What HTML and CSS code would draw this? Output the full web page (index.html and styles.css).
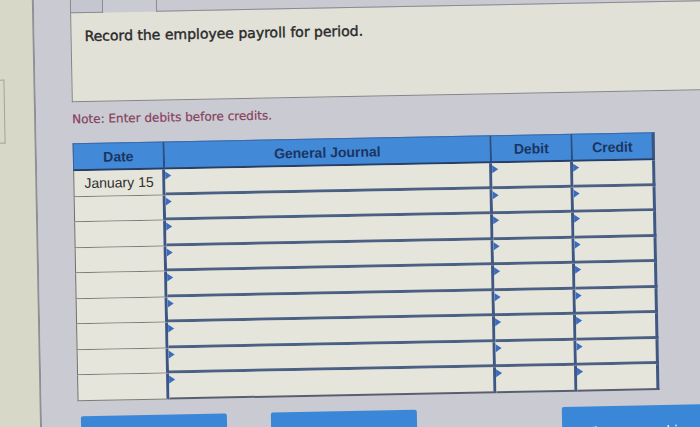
FILE: index.html
```html
<!DOCTYPE html>
<html lang="en">
<head>
<meta charset="utf-8">
<title>Record the employee payroll</title>
<link rel="stylesheet" href="styles.css">
</head>
<body>
<div class="page">
  <div class="strip">
    <div class="strip-box"></div>
  </div>
  <div class="main">
    <div class="tabs">
      <div class="tab tab-a"></div>
      <div class="tab tab-b"></div>
    </div>
    <div class="prompt">
      <p class="prompt-text">Record the employee payroll for period.</p>
    </div>
    <p class="note">Note: Enter debits before credits.</p>
    <div class="journal">
      <div class="hd">Date</div>
      <div class="hd">General Journal</div>
      <div class="hd">Debit</div>
      <div class="hd hd-last">Credit</div>

      <div class="c-date">January 15</div><div class="c-in c-gj"></div><div class="c-in"></div><div class="c-in"></div>
      <div class="c-date"></div><div class="c-in c-gj"></div><div class="c-in"></div><div class="c-in"></div>
      <div class="c-date"></div><div class="c-in c-gj"></div><div class="c-in"></div><div class="c-in"></div>
      <div class="c-date"></div><div class="c-in c-gj"></div><div class="c-in"></div><div class="c-in"></div>
      <div class="c-date"></div><div class="c-in c-gj"></div><div class="c-in"></div><div class="c-in"></div>
      <div class="c-date"></div><div class="c-in c-gj"></div><div class="c-in"></div><div class="c-in"></div>
      <div class="c-date"></div><div class="c-in c-gj"></div><div class="c-in"></div><div class="c-in"></div>
      <div class="c-date"></div><div class="c-in c-gj"></div><div class="c-in"></div><div class="c-in"></div>
      <div class="c-date last"></div><div class="c-in c-gj last"></div><div class="c-in last"></div><div class="c-in last"></div>
    </div>
    <div class="buttons">
      <button class="btn btn-record" aria-label="Record entry"></button>
      <button class="btn btn-clear" aria-label="Clear entry"></button>
      <button class="btn btn-view">View general journal</button>
    </div>
  </div>
</div>
</body>
</html>
```

FILE: styles.css
```css
html, body {
  margin: 0;
  padding: 0;
  width: 700px;
  height: 427px;
  overflow: hidden;
  background: #cdcdd3;
}

* {
  box-sizing: border-box;
}

.page {
  width: 820px;
  height: 520px;
  margin: -36px 0 0 -40px;
  display: flex;
  transform: rotate(-1.1deg);
  transform-origin: 390px 249px;
  background: #cdcdd3;
}

.strip {
  width: 78px;
  flex: none;
  background: #d8d8c9;
  border-right: 2px solid #8f8f96;
  padding: 109px 0 0 40px;
}

.strip-box {
  width: 7px;
  height: 64px;
  border: 1px solid #a3a39a;
  border-left: none;
}

.main {
  flex: 1;
  padding: 30px 0 0 36px;
  background: #cacad2;
}

.tabs {
  height: 14px;
  display: flex;
}

.tab {
  background: #c6c6d0;
  border-bottom: 1px solid #8a8a8f;
}

.tab-a {
  width: 33px;
  border-left: 1px solid #8a8a8f;
  border-right: 1px solid #8a8a8f;
}

.tab-b {
  flex: 1;
  margin-left: 53px;
  border-left: 1px solid #8a8a8f;
  background: #c9c9d1;
}

.prompt {
  height: 89px;
  background: #e2e1d8;
  border: 1px solid #85858a;
  border-top: none;
  padding: 15px 0 0 13px;
}

.prompt-text {
  margin: 0;
  font-family: "DejaVu Sans", Verdana, sans-serif;
  font-size: 14px;
  line-height: 17px;
  color: #2a2a2a;
  -webkit-text-stroke: 0.4px #2a2a2a;
}

.note {
  margin: 10px 0 0 0;
  font-family: "DejaVu Sans", Verdana, sans-serif;
  font-size: 12px;
  line-height: 14px;
  color: #86405a;
  -webkit-text-stroke: 0.2px #86405a;
}

.journal {
  margin-top: 17px;
  width: 582px;
  display: grid;
  grid-template-columns: 92px 327px 81px 82px;
  grid-template-rows: 28px repeat(9, 25.5px);
  font-family: "Liberation Sans", Arial, sans-serif;
  font-size: 14px;
}

.hd {
  background: #4289d8;
  color: #1b3560;
  font-weight: bold;
  display: flex;
  align-items: center;
  justify-content: center;
  border-top: 1px solid #3a6aa8;
  border-right: 2px solid #2c4f82;
  border-bottom: 2px solid #2a3d62;
}

.hd:first-child {
  border-left: 1px solid #3a5f96;
}

.hd-last {
  border-right: 3px solid #3c557e;
}

.c-date {
  background: #e6e5db;
  border-left: 1px solid #6e6e6e;
  border-bottom: 1px solid #7b7b78;
  border-right: 3px solid #3b5686;
  display: flex;
  align-items: center;
  padding-left: 10px;
  color: #2e2e2e;
}

.c-in {
  position: relative;
  background: #e6e5db;
  border-bottom: 3px solid #4b6082;
  border-right: 3px solid #3d5884;
}

.c-in::before {
  content: "";
  position: absolute;
  left: 0;
  top: 2px;
  border-top: 4px solid transparent;
  border-bottom: 4px solid transparent;
  border-left: 6px solid #3a6cbf;
}

.c-gj.last {
  border-bottom: 2px solid #5a6070;
}

.c-in.last {
  border-bottom-width: 2px;
  border-bottom-color: #585e70;
}

.buttons {
  margin-top: 15px;
  display: flex;
  padding-left: 3px;
}

.btn {
  height: 40px;
  border: none;
  border-radius: 2px;
  background: #3b87d7;
  color: #ffffff;
  font-family: "DejaVu Sans", Verdana, sans-serif;
  font-size: 13px;
  padding: 12px 0 0 0;
  text-align: center;
  display: block;
  align-self: flex-start;
  line-height: 16px;
}

.btn-record {
  width: 146px;
}

.btn-clear {
  width: 146px;
  margin-left: 44px;
}

.btn-view {
  width: 180px;
  margin-left: 145px;
}
```
